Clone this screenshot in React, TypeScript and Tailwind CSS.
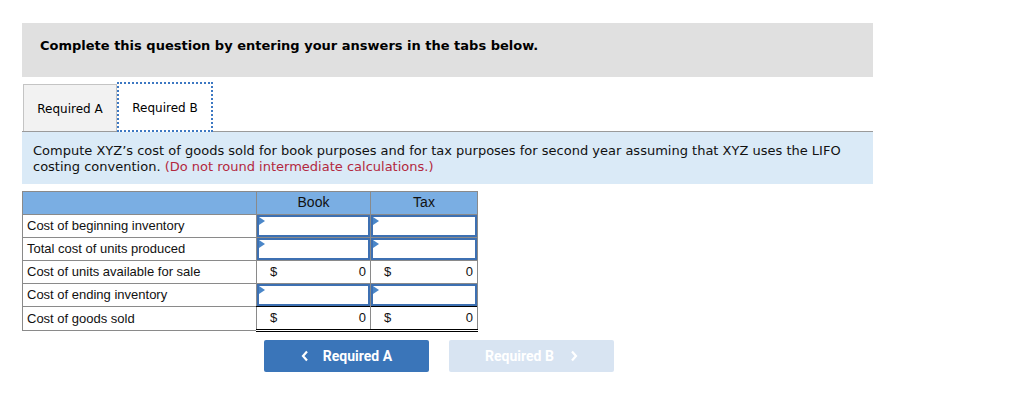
import React from "react";

const verdana = { fontFamily: "'DejaVu Sans', Verdana, sans-serif" } as const;

function InputCell() {
  return (
    <td className="border border-[#8a8a8a] p-0 h-[22px]">
      <div className="relative h-[22px] border-2 border-[#3d70b2] bg-white">
        <div className="absolute left-0 top-0 w-0 h-0 border-t-[4px] border-b-[4px] border-l-[6px] border-t-transparent border-b-transparent border-l-[#4a86c8]" />
      </div>
    </td>
  );
}

function ComputedCell({ last }: { last?: boolean }) {
  return (
    <td
      className={
        "border-x border-x-[#8a8a8a] border-t border-t-black p-0 h-[22px] " +
        (last ? "border-b-[3px] border-b-black border-double" : "border-b border-b-[#8a8a8a]")
      }
    >
      <div className="flex justify-between items-center pl-[13px] pr-[4px] h-[22px] text-[13px]">
        <span>$</span>
        <span>0</span>
      </div>
    </td>
  );
}

export default function App() {
  const rows: { label: string; computed: boolean }[] = [
    { label: "Cost of beginning inventory", computed: false },
    { label: "Total cost of units produced", computed: false },
    { label: "Cost of units available for sale", computed: true },
    { label: "Cost of ending inventory", computed: false },
    { label: "Cost of goods sold", computed: true },
  ];
  return (
    <div className="w-[1019px] h-[415px] bg-white text-[#111]">
      <div className="pt-[23px] pl-[22px] w-[873px]">
        <div className="bg-[#e0e0e0] h-[54px] flex items-center pl-[18px] pb-[8px]">
          <span style={verdana} className="text-[13px] font-bold text-black">
            Complete this question by entering your answers in the tabs below.
          </span>
        </div>
        <div className="mt-[7px] flex items-end h-[48px] border-b border-[#9a9a9a]">
          <div
            style={verdana}
            className="ml-[1px] h-[47px] w-[94px] bg-[#f2f2f2] border border-b-0 border-[#c4c4c4] flex items-center justify-center pt-[2px] text-[12px] text-black"
          >
            Required A
          </div>
          <div
            style={verdana}
            className="h-[50px] w-[96px] mb-[-1px] bg-white border-2 border-dotted border-[#3d78c2] flex items-center justify-center pt-[2px] text-[12px] text-black"
          >
            Required B
          </div>
        </div>
        <div
          style={verdana}
          className="bg-[#daeaf7] h-[52px] pl-[11px] pr-[14px] pt-[11px] text-[13px] leading-[16px] text-[#111]"
        >
          Compute XYZ’s cost of goods sold for book purposes and for tax purposes for second year assuming that XYZ uses
          the LIFO costing convention. <span className="text-[#b3283e]">(Do not round intermediate calculations.)</span>
        </div>
        <table
          className="mt-[7px] border-collapse text-[13px] text-[#111]"
          style={{ fontFamily: "'Liberation Sans', Arial, sans-serif" }}
        >
          <colgroup>
            <col className="w-[234px]" />
            <col className="w-[114px]" />
            <col className="w-[107px]" />
          </colgroup>
          <thead>
            <tr className="bg-[#7aaee3]">
              <th className="border border-[#8a8a8a] h-[22px]"></th>
              <th className="border border-[#8a8a8a] h-[22px] font-normal text-[14px] pb-[1px]">Book</th>
              <th className="border border-[#8a8a8a] h-[22px] font-normal text-[14px] pb-[1px]">Tax</th>
            </tr>
          </thead>
          <tbody>
            {rows.map((r) => (
              <tr key={r.label}>
                <td className="border border-[#8a8a8a] h-[22px] pl-[4px] p-0 text-[13px] leading-[22px]">{r.label}</td>
                {r.computed ? (
                  <>
                    <ComputedCell last={r.label === "Cost of goods sold"} />
                    <ComputedCell last={r.label === "Cost of goods sold"} />
                  </>
                ) : (
                  <>
                    <InputCell />
                    <InputCell />
                  </>
                )}
              </tr>
            ))}
          </tbody>
        </table>
        <div className="mt-[8px] flex gap-[20px] pl-[242px]" style={{ fontFamily: "Roboto, sans-serif" }}>
          <button className="w-[165px] h-[32px] rounded-[2px] bg-[#3a75b9] text-white font-bold text-[14px] flex items-center justify-center gap-[14px]">
            <svg width="8" height="12" viewBox="0 0 8 12">
              <path d="M6 1.5 L2 6 L6 10.5" stroke="white" strokeWidth="2.2" fill="none" />
            </svg>
            <span>Required A</span>
          </button>
          <button className="w-[165px] h-[32px] rounded-[2px] bg-[#d8e4f2] text-white font-bold text-[14px] flex items-center justify-center gap-[16px]">
            <span>Required B</span>
            <svg width="8" height="12" viewBox="0 0 8 12">
              <path d="M2 1.5 L6 6 L2 10.5" stroke="white" strokeWidth="2.2" fill="none" />
            </svg>
          </button>
        </div>
      </div>
    </div>
  );
}
